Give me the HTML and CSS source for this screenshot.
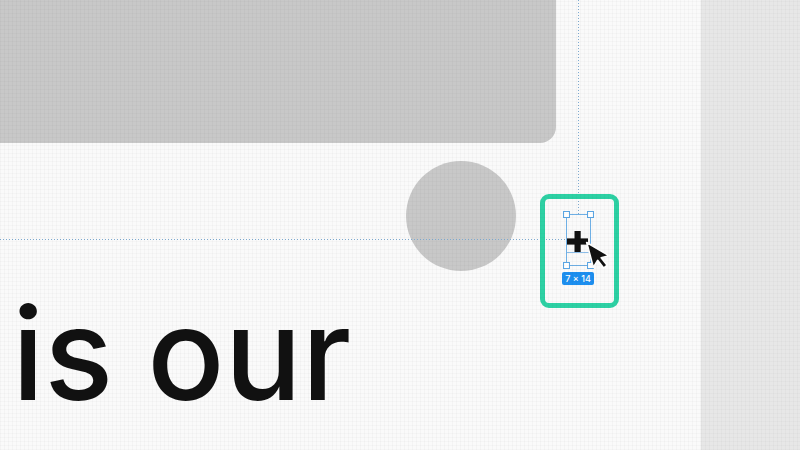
FILE: index.html
```html
<!DOCTYPE html>
<html lang="en">
<head>
<meta charset="utf-8">
<title>Canvas</title>
<link rel="stylesheet" href="styles.css">
</head>
<body>
<div class="app">
  <main class="canvas">
    <div class="shape rect"></div>
    <div class="shape circle"></div>
    <div class="guide guide-v"></div>
    <div class="guide guide-h"></div>
    <div class="headline">is our</div>
    <div class="focus-ring"></div>
    <div class="selection">
      <span class="handle h-tl"></span>
      <span class="handle h-tr"></span>
      <span class="handle h-bl"></span>
      <span class="handle h-br"></span>
      <span class="sel-line"></span>
    </div>
    <svg class="plus" viewBox="0 0 21 21" width="21" height="21">
      <rect x="7.5" y="0" width="6.2" height="21" fill="#111"/>
      <rect x="0" y="7.4" width="21" height="6.2" fill="#111"/>
    </svg>
    <div class="size-tag">7 × 14</div>
    <svg class="pointer" viewBox="-2 -2 20 28" width="26" height="36">
      <path d="M0 0 L0 20 L4.6 15.6 L7.6 22.6 L10.8 21.2 L7.8 14.4 L14.2 14.4 Z" fill="#111" stroke="#fff" stroke-width="1.3" stroke-linejoin="round"/>
    </svg>
    <div class="grid-overlay"></div>
  </main>
  <aside class="panel"></aside>
</div>
</body>
</html>
```
FILE: styles.css
```css
html, body {
  margin: 0;
  padding: 0;
  width: 800px;
  height: 450px;
  overflow: hidden;
  font-family: Inter, "Liberation Sans", sans-serif;
}

.app {
  display: flex;
  width: 800px;
  height: 450px;
}

.canvas {
  position: relative;
  flex: 0 0 701px;
  height: 450px;
  background: #fafafa;
  overflow: hidden;
}

.panel {
  flex: 1;
  height: 450px;
  background-color: #e7e7e7;
  background-image:
    repeating-linear-gradient(90deg, rgba(0,0,0,0.025) 0 1px, transparent 1px 4px),
    repeating-linear-gradient(0deg, rgba(0,0,0,0.02) 0 1px, transparent 1px 4px);
}

.shape {
  position: absolute;
  background: #c8c8c8;
}

.rect {
  left: -20px;
  top: -20px;
  width: 576px;
  height: 163px;
  border-radius: 16px;
}

.circle {
  left: 406px;
  top: 161px;
  width: 110px;
  height: 110px;
  border-radius: 50%;
}

.guide {
  position: absolute;
}

.guide-v {
  left: 578px;
  top: 0;
  width: 1px;
  height: 214px;
  background: repeating-linear-gradient(180deg, #7eaad0 0 1px, transparent 1px 3px);
}

.guide-h {
  left: 0;
  top: 239px;
  width: 567px;
  height: 1px;
  background: repeating-linear-gradient(90deg, #7eaad0 0 1px, transparent 1px 3px);
}

.headline {
  position: absolute;
  left: 12px;
  top: 290px;
  font-size: 128px;
  line-height: 1;
  font-weight: 500;
  color: #111;
  white-space: nowrap;
  letter-spacing: 0;
}

.focus-ring {
  position: absolute;
  left: 540px;
  top: 194px;
  width: 69px;
  height: 104px;
  border: 5px solid #2dd1a4;
  border-radius: 9px;
}

.selection {
  position: absolute;
  left: 566px;
  top: 214px;
  width: 23px;
  height: 50px;
  border: 1px solid #6fb0e6;
}

.handle {
  position: absolute;
  width: 5px;
  height: 5px;
  background: #fff;
  border: 1px solid #5ba6e4;
}

.h-tl { left: -4px; top: -4px; }
.h-tr { right: -4px; top: -4px; }
.h-bl { left: -4px; bottom: -4px; }
.h-br { right: -4px; bottom: -4px; }

.sel-line {
  position: absolute;
  left: 0;
  right: 0;
  top: 37px;
  height: 1px;
  background: #8cbde8;
}

.plus {
  position: absolute;
  left: 567px;
  top: 231px;
}

.size-tag {
  position: absolute;
  left: 562px;
  top: 272px;
  width: 32px;
  height: 13px;
  background: #1d8ff0;
  border-radius: 2px;
  color: #fff;
  font-size: 9px;
  font-weight: 500;
  line-height: 13px;
  text-align: center;
}

.pointer {
  position: absolute;
  left: 584px;
  top: 240px;
  transform: rotate(-15deg);
  transform-origin: 2.6px 2.6px;
}

.grid-overlay {
  position: absolute;
  inset: 0;
  pointer-events: none;
  background-image:
    repeating-linear-gradient(90deg, rgba(0,0,0,0.022) 0 1px, transparent 1px 4px),
    repeating-linear-gradient(0deg, rgba(0,0,0,0.018) 0 1px, transparent 1px 4px);
}
```
